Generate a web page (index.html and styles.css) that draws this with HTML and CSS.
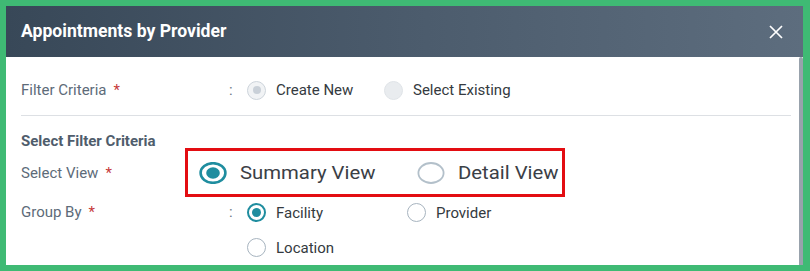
FILE: index.html
```html
<!DOCTYPE html>
<html>
<head>
<meta charset="utf-8">
<link rel="stylesheet" href="styles.css">
</head>
<body>
<div class="modal">
  <div class="header">
    <div class="title">Appointments by Provider</div>
    <svg class="close" width="14" height="14" viewBox="0 0 14 14"><path d="M1 1L13 13M13 1L1 13" stroke="#fff" stroke-width="1.7" fill="none"/></svg>
  </div>
  <div class="content">
    <div class="form">
      <div class="row row-filter">
        <div class="label">Filter Criteria<span class="req">*</span></div>
        <div class="colon">:</div>
        <div class="option opt-create"><span class="radio disabled-checked"></span><span class="opt-text">Create New</span></div>
        <div class="option"><span class="radio disabled"></span><span class="opt-text">Select Existing</span></div>
      </div>
      <div class="divider"></div>
      <div class="section">Select Filter Criteria</div>
      <div class="row row-view">
        <div class="label label-view">Select View<span class="req">*</span></div>
        <div class="highlight">
          <div class="big-option big-summary">
            <svg class="big-radio" width="28" height="22" viewBox="0 0 28 22"><ellipse cx="14" cy="11" rx="12.4" ry="9.8" fill="none" stroke="#1f8d9f" stroke-width="2.6"/><ellipse cx="14" cy="11" rx="6.8" ry="5.8" fill="#1f8d9f"/></svg>
            <span class="big-text"><span class="stretch">Summary View</span></span>
          </div>
          <div class="big-option">
            <svg class="big-radio" width="28" height="22" viewBox="0 0 28 22"><ellipse cx="14" cy="11" rx="12.6" ry="10" fill="none" stroke="#b3c0ca" stroke-width="1.8"/></svg>
            <span class="big-text"><span class="stretch">Detail View</span></span>
          </div>
        </div>
      </div>
      <div class="row row-group">
        <div class="label label-group">Group By<span class="req">*</span></div>
        <div class="colon colon-group">:</div>
        <div class="group-grid">
          <div class="option"><span class="radio checked"></span><span class="opt-text">Facility</span></div>
          <div class="option"><span class="radio"></span><span class="opt-text">Provider</span></div>
          <div class="option"><span class="radio"></span><span class="opt-text">Location</span></div>
        </div>
      </div>
    </div>
    <div class="scrollbar"></div>
  </div>
</div>
</body>
</html>
```

FILE: styles.css
```css
html, body {
  margin: 0;
  padding: 0;
}
body {
  background: #3fba74;
  font-family: Roboto, "Liberation Sans", Arial, sans-serif;
  width: 810px;
  height: 271px;
  overflow: hidden;
}
.modal {
  margin: 6px 7px 0 6px;
  height: 259px;
  display: flex;
  flex-direction: column;
  background: #fff;
  overflow: hidden;
}
.header {
  height: 51px;
  flex: none;
  display: flex;
  align-items: center;
  justify-content: space-between;
  padding: 0 20px 0 15px;
  background: linear-gradient(90deg, #384858 0%, #4b5b6c 50%, #5d6d7e 100%);
}
.title {
  color: #fff;
  font-weight: 700;
  font-size: 17.6px;
  margin-top: -1px;
}
.close {
  display: block;
}
.content {
  flex: 1;
  display: flex;
  min-height: 0;
}
.form {
  flex: 1;
  padding: 18px 8px 0 15px;
}
.scrollbar {
  width: 4px;
  background: #98a2ac;
  border-radius: 2px 2px 0 0;
}
.row {
  display: flex;
  align-items: center;
}
.row-filter {
  height: 30px;
}
.label {
  width: 208px;
  flex: none;
  font-size: 15px;
  color: #5d6b79;
}
.req {
  color: #c63a3a;
  margin-left: 7px;
}
.colon {
  width: 18px;
  flex: none;
  font-size: 15px;
  color: #6c7884;
}
.option {
  display: flex;
  align-items: center;
  gap: 10px;
  font-size: 15px;
  color: #343a40;
}
.opt-create {
  width: 137px;
}
.radio {
  width: 19px;
  height: 19px;
  box-sizing: border-box;
  border-radius: 50%;
  border: 1.5px solid #a7b4bf;
  background: #fff;
  display: flex;
  align-items: center;
  justify-content: center;
  flex: none;
}
.radio.checked {
  border: 2px solid #1f8d9f;
}
.radio.checked::after {
  content: "";
  width: 9px;
  height: 9px;
  border-radius: 50%;
  background: #1f8d9f;
}
.radio.disabled-checked {
  border: 1.5px solid #cdd4db;
  background: #f1f3f5;
}
.radio.disabled-checked::after {
  content: "";
  width: 8px;
  height: 8px;
  border-radius: 50%;
  background: #c9d0d8;
}
.radio.disabled {
  border: 1px solid #e0e4e8;
  background: #e9ecef;
}
.divider {
  height: 1px;
  background: #dde0e4;
  margin-top: 10px;
}
.section {
  margin-top: 18px;
  height: 14px;
  line-height: 14px;
  font-size: 15px;
  font-weight: 700;
  color: #4f5d6c;
}
.row-view {
  height: 49px;
}
.label-view {
  width: 164px;
}
.highlight {
  box-sizing: border-box;
  width: 380px;
  height: 49px;
  border: 3px solid #e30d12;
  display: flex;
  align-items: center;
  padding-left: 11px;
}
.big-option {
  display: flex;
  align-items: center;
}
.big-summary {
  width: 218px;
}
.big-radio {
  display: block;
  flex: none;
}
.big-text {
  margin-left: 13px;
  font-size: 17.5px;
  color: #3b4046;
  display: inline-block;
}
.stretch {
  display: inline-block;
  transform: scaleX(1.16);
  transform-origin: left center;
}
.row-group {
  align-items: flex-start;
}
.label-group, .colon-group {
  line-height: 31px;
}
.group-grid {
  display: grid;
  grid-template-columns: 160px 160px;
  grid-auto-rows: 31px;
  row-gap: 4px;
}
```
